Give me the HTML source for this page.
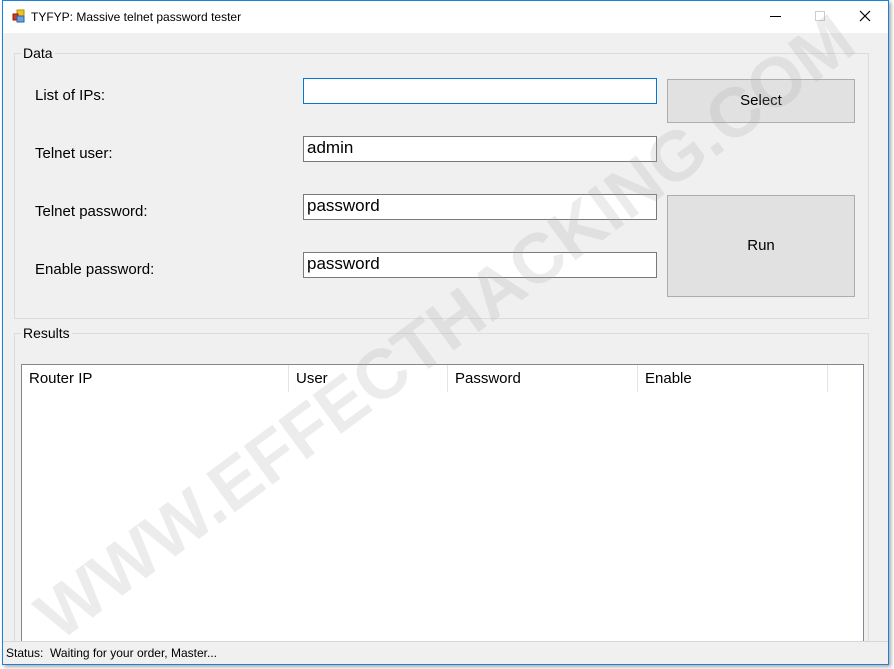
<!DOCTYPE html>
<html><head><style>
*{margin:0;padding:0;box-sizing:border-box}
body{width:894px;height:669px;background:#fff;position:relative;overflow:hidden;font-family:"Liberation Sans",sans-serif;color:#000}
.win{position:absolute;left:2px;top:0;width:887px;height:665px;border:1px solid #1883d7;background:#f0f0f0;box-shadow:2px 2px 4px rgba(0,0,0,.35);overflow:hidden}
.title{position:absolute;left:0;top:0;width:885px;height:32px;background:#fff}
.abs{position:absolute}
.grp{position:absolute;border:1px solid #dcdcdc}
.lg{position:absolute;background:#f0f0f0;padding:0 2px;font-size:14px}
.lbl{position:absolute;font-size:15px}
.inp{position:absolute;left:300px;width:354px;height:26px;border:1px solid #7a7a7a;background:#fff;font-size:17px;padding-left:3px;line-height:22px}
.btn{position:absolute;left:664px;width:188px;background:#e1e1e1;border:1px solid #adadad;font-size:15px;text-align:center}
.hd{position:absolute;top:0;height:27px;font-size:15px;line-height:27px;padding-left:7px;border-right:1px solid #e5e5e5}
.wm{position:absolute;left:-108px;top:281px;width:1100px;height:90px;line-height:90px;text-align:center;font-size:70px;font-weight:bold;color:rgba(170,170,170,.22);transform:rotate(-36.5deg);white-space:nowrap}
</style></head><body>
<div class="win">
 <div class="title">
  <svg class="abs" style="left:9px;top:8px" width="14" height="14" viewBox="0 0 14 14"><rect x="5" y="1" width="7" height="6" fill="#f3c21b" stroke="#b08a10"/><rect x="1" y="5" width="5" height="6" fill="#d03a2a" stroke="#8a1a10"/><rect x="5" y="7" width="7" height="6" fill="#6aa0e0" stroke="#3060a0"/></svg>
  <div class="abs" style="left:28px;top:9px;font-size:12px">TYFYP: Massive telnet password tester</div>
  <div class="abs" style="left:767px;top:15px;width:11px;height:1px;background:#000"></div>
  <div class="abs" style="left:812px;top:10px;width:10px;height:10px;border:1px solid #ccc"></div>
  <svg class="abs" style="left:856px;top:9px" width="12" height="12"><path d="M1 1L11 11M11 1L1 11" stroke="#000" stroke-width="1.2"/></svg>
 </div>
 <div class="grp" style="left:11px;top:52px;width:855px;height:266px"></div>
 <div class="lg" style="left:18px;top:44px">Data</div>
 <div class="lbl" style="left:32px;top:86px">List of IPs:</div>
 <div class="lbl" style="left:32px;top:144px">Telnet user:</div>
 <div class="lbl" style="left:32px;top:202px">Telnet password:</div>
 <div class="lbl" style="left:32px;top:260px">Enable password:</div>
 <div class="inp" style="top:77px;border-color:#0078d7"></div>
 <div class="inp" style="top:135px">admin</div>
 <div class="inp" style="top:193px">password</div>
 <div class="inp" style="top:251px">password</div>
 <div class="btn" style="top:78px;height:44px;line-height:42px">Select</div>
 <div class="btn" style="top:194px;height:102px;line-height:100px">Run</div>
 <div class="grp" style="left:11px;top:332px;width:855px;height:320px"></div>
 <div class="lg" style="left:18px;top:324px">Results</div>
 <div class="abs" style="left:18px;top:363px;width:843px;height:290px;border:1px solid #828790;background:#fff">
  <div class="hd" style="left:0;width:267px">Router IP</div>
  <div class="hd" style="left:267px;width:159px">User</div>
  <div class="hd" style="left:426px;width:190px">Password</div>
  <div class="hd" style="left:616px;width:190px">Enable</div>
 </div>
 <div class="abs" style="left:0;top:640px;width:885px;height:23px;background:#f0f0f0;border-top:1px solid #d7d7d7;font-size:12px;line-height:23px;padding-left:3px">Status: &nbsp;Waiting for your order, Master...</div>
 <div class="wm">WWW.EFFECTHACKING.COM</div>
</div>
</body></html>
